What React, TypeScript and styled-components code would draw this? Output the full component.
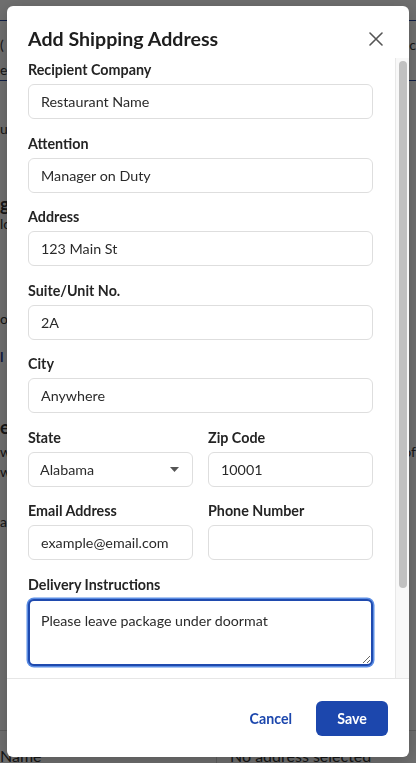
import React from 'react';
import styled, { createGlobalStyle } from 'styled-components';

const Global = createGlobalStyle`
  html, body { margin: 0; padding: 0; }
  body {
    font-family: Lato, "Noto Sans", "Liberation Sans", sans-serif;
    background: #ffffff;
    overflow: hidden;
  }
  * { box-sizing: border-box; }
`;

/* ---------- background page ---------- */
const BgPage = styled.div`
  width: 416px;
  height: 763px;
  overflow: hidden;
  display: flex;
  flex-direction: column;
  color: #333;
  font-size: 14px;
`;

const Banner = styled.div`
  margin-top: 20px;
  height: 69px;
  border-top: 1.5px solid #2346a0;
  border-bottom: 1.5px solid #2346a0;
  display: flex;
  flex-direction: column;
  padding-top: 13.5px;
  gap: 5px;
`;

const BgRow = styled.div<{ $mt?: number; $bold?: boolean; $blue?: boolean; $size?: number }>`
  margin-top: ${(p) => p.$mt ?? 0}px;
  height: 20px;
  line-height: 20px;
  display: flex;
  justify-content: space-between;
  white-space: nowrap;
  font-size: ${(p) => p.$size ?? 14}px;
  font-weight: ${(p) => (p.$bold ? 700 : 400)};
  color: ${(p) => (p.$blue ? '#1d3f9a' : '#333')};
`;

const BgRule = styled.div<{ $mt?: number }>`
  margin-top: ${(p) => p.$mt ?? 0}px;
  height: 1px;
  background: #cfcfcf;
`;

const BgTableRow = styled.div<{ $mt?: number }>`
  margin-top: ${(p) => p.$mt ?? 0}px;
  display: grid;
  grid-template-columns: 216px 1fr;
  border-top: 1px solid #d6d6d6;
  height: 40px;
`;

const BgCell = styled.div<{ $divider?: boolean }>`
  padding: 15px 0 0 ${(p) => (p.$divider ? 13 : 0)}px;
  border-left: ${(p) => (p.$divider ? '1px solid #d6d6d6' : 'none')};
  font-size: 16px;
  white-space: nowrap;
`;

const Overlay = styled.div`
  position: fixed;
  inset: 0;
  background: rgba(0, 0, 0, 0.57);
`;

/* ---------- modal ---------- */
const Modal = styled.div`
  position: fixed;
  top: 6px;
  left: 7px;
  width: 402px;
  height: 751px;
  background: #ffffff;
  border-radius: 6px;
  display: flex;
  flex-direction: column;
  overflow: hidden;
  box-shadow: 0 4px 16px rgba(0, 0, 0, 0.2);
`;

const Header = styled.div`
  display: flex;
  align-items: center;
  justify-content: space-between;
  padding: 21px 26px 7px 21px;
`;

const Title = styled.h2`
  margin: 0;
  font-size: 19.6px;
  line-height: 24px;
  font-weight: 700;
  color: #1e1e1e;
`;

const CloseButton = styled.button`
  width: 14px;
  height: 14px;
  padding: 0;
  border: none;
  background: none;
  display: flex;
  align-items: center;
  justify-content: center;
  cursor: pointer;
`;

const BodyArea = styled.div`
  flex: 1;
  min-height: 0;
  display: flex;
`;

const Body = styled.div`
  flex: 1;
  min-width: 0;
  overflow-y: auto;
  scrollbar-width: none;
  padding: 2px 22px 122px 21px;
`;

const ScrollTrack = styled.div`
  width: 14px;
  flex: none;
  background: #f8f8f8;
  border-left: 1px solid #e8e8e8;
  padding: 3px 2px 0 3px;
`;

const ScrollThumb = styled.div<{ $h: number }>`
  height: ${(p) => p.$h}px;
  border-radius: 5px;
  background: #c1c1c1;
`;

const Form = styled.div`
  display: flex;
  flex-direction: column;
  gap: 14.5px;
`;

const Row = styled.div`
  display: grid;
  grid-template-columns: 1fr 1fr;
  column-gap: 15px;
`;

const Field = styled.label`
  display: flex;
  flex-direction: column;
  min-width: 0;
`;

const Label = styled.span`
  font-size: 14.3px;
  line-height: 20px;
  font-weight: 700;
  color: #242424;
  margin-bottom: 4px;
`;

const Input = styled.input`
  height: 35px;
  width: 100%;
  border: 1px solid #dedede;
  border-radius: 6px;
  padding: 0 12px;
  font-family: inherit;
  font-size: 14.3px;
  color: #2a2a2a;
  background: #fff;
  outline: none;
`;

const SelectWrap = styled.div`
  position: relative;
`;

const Select = styled.select`
  appearance: none;
  -webkit-appearance: none;
  height: 35px;
  width: 100%;
  border: 1px solid #dedede;
  border-radius: 6px;
  padding: 0 30px 0 11px;
  font-family: inherit;
  font-size: 14.3px;
  color: #2a2a2a;
  background: #fff;
  outline: none;
`;

const Caret = styled.svg`
  position: absolute;
  right: 14px;
  top: 15px;
  pointer-events: none;
`;

const TextArea = styled.textarea`
  height: 67px;
  width: 100%;
  border: 2px solid #1f4aae;
  box-shadow: 0 0 0 1.5px #5b8de4;
  border-radius: 6px;
  padding: 10px 11px;
  font-family: inherit;
  font-size: 14.2px;
  line-height: 20px;
  color: #2a2a2a;
  outline: none;
  resize: vertical;
`;

const Footer = styled.div`
  border-top: 1px solid #e6e6e6;
  padding: 22px 21px 21px;
  display: flex;
  justify-content: flex-end;
  align-items: center;
  gap: 12px;
`;

const TextButton = styled.button`
  height: 35px;
  padding: 0 12px;
  border: none;
  background: none;
  font-family: inherit;
  font-size: 14.2px;
  font-weight: 700;
  color: #1c47ad;
  cursor: pointer;
`;

const PrimaryButton = styled.button`
  height: 35px;
  width: 72px;
  border: none;
  border-radius: 6px;
  background: #1c47ad;
  font-family: inherit;
  font-size: 14.2px;
  font-weight: 700;
  color: #fff;
  cursor: pointer;
`;

export default function App() {
  return (
    <>
      <Global />
      <BgPage aria-hidden="true">
        <Banner>
          <BgRow>
            <span>(</span>
            <span>c</span>
          </BgRow>
          <BgRow>
            <span>e)</span>
            <span />
          </BgRow>
        </Banner>
        <BgRow $mt={38}>
          <span>u</span>
          <span />
        </BgRow>
        <BgRow $mt={55} $bold $size={18}>
          <span>g</span>
          <span />
        </BgRow>
        <BgRow>
          <span>lo</span>
          <span />
        </BgRow>
        <BgRule $mt={64} />
        <BgRow $mt={11}>
          <span>o</span>
          <span />
        </BgRow>
        <BgRule $mt={10} />
        <BgRow $mt={8} $blue $bold>
          <span>l</span>
          <span />
        </BgRow>
        <BgRow $mt={50} $bold $size={18}>
          <span>e</span>
          <span />
        </BgRow>
        <BgRow $mt={5}>
          <span>w</span>
          <span>of</span>
        </BgRow>
        <BgRow>
          <span>w</span>
          <span />
        </BgRow>
        <BgRow $mt={30}>
          <span>a</span>
          <span />
        </BgRow>
        <BgRule $mt={11} />
        <BgTableRow $mt={187}>
          <BgCell>Name</BgCell>
          <BgCell $divider>No address selected</BgCell>
        </BgTableRow>
      </BgPage>
      <Overlay />
      <Modal role="dialog" aria-label="Add Shipping Address">
        <Header>
          <Title>Add Shipping Address</Title>
          <CloseButton aria-label="Close">
            <svg width="14" height="14" viewBox="0 0 14 14">
              <path d="M1 1 L13 13 M13 1 L1 13" stroke="#555" strokeWidth="1.6" strokeLinecap="round" />
            </svg>
          </CloseButton>
        </Header>
        <BodyArea>
          <Body>
            <Form>
              <Field>
                <Label>Recipient Company</Label>
                <Input defaultValue="Restaurant Name" />
              </Field>
              <Field>
                <Label>Attention</Label>
                <Input defaultValue="Manager on Duty" />
              </Field>
              <Field>
                <Label>Address</Label>
                <Input defaultValue="123 Main St" />
              </Field>
              <Field>
                <Label>Suite/Unit No.</Label>
                <Input defaultValue="2A" />
              </Field>
              <Field>
                <Label>City</Label>
                <Input defaultValue="Anywhere" />
              </Field>
              <Row>
                <Field>
                  <Label>State</Label>
                  <SelectWrap>
                    <Select defaultValue="AL">
                      <option value="AL">Alabama</option>
                      <option value="AK">Alaska</option>
                    </Select>
                    <Caret width="9" height="5" viewBox="0 0 9 5">
                      <path d="M0 0 H9 L4.5 5 Z" fill="#555" />
                    </Caret>
                  </SelectWrap>
                </Field>
                <Field>
                  <Label>Zip Code</Label>
                  <Input defaultValue="10001" />
                </Field>
              </Row>
              <Row>
                <Field>
                  <Label>Email Address</Label>
                  <Input defaultValue="example@email.com" />
                </Field>
                <Field>
                  <Label>Phone Number</Label>
                  <Input defaultValue="" />
                </Field>
              </Row>
              <Field>
                <Label>Delivery Instructions</Label>
                <TextArea defaultValue="Please leave package under doormat" />
              </Field>
            </Form>
          </Body>
          <ScrollTrack aria-hidden="true">
            <ScrollThumb $h={527} />
          </ScrollTrack>
        </BodyArea>
        <Footer>
          <TextButton>Cancel</TextButton>
          <PrimaryButton>Save</PrimaryButton>
        </Footer>
      </Modal>
    </>
  );
}
